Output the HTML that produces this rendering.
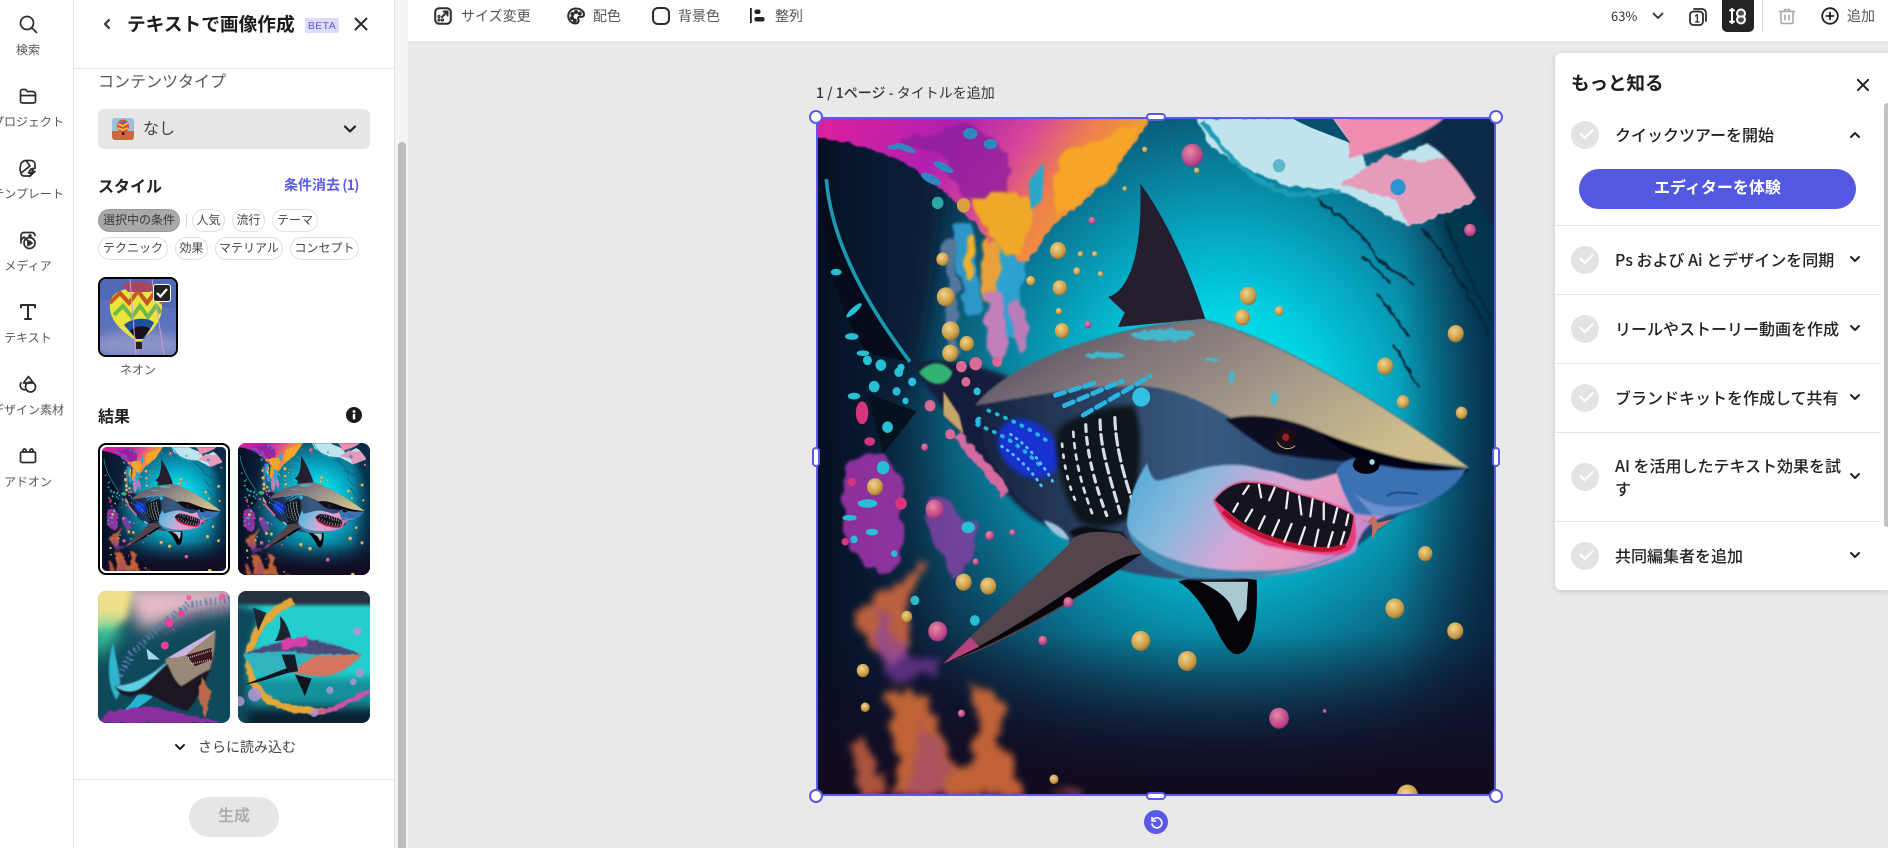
<!DOCTYPE html>
<html lang="ja"><head><meta charset="utf-8"><title>テキストで画像作成</title>
<style>
html,body{margin:0;padding:0;width:1888px;height:848px;overflow:hidden;background:#e9e9e9;font-family:"Liberation Sans","Noto Sans CJK JP",sans-serif;color:#2c2c2c}
.a{position:absolute;white-space:nowrap}
.n{font-family:"Noto Sans CJK JP","Liberation Sans",sans-serif}
.rl{position:absolute;left:0;width:56px;text-align:center;font-size:12px;line-height:16px;color:#555;white-space:nowrap;display:flex;justify-content:center}
.chip{position:absolute;height:21px;line-height:20px;border:1.5px solid #e1e1e1;border-radius:12px;font-size:12px;text-align:center;color:#444;background:#fff;box-sizing:content-box}
.ln{position:absolute;background:#e4e4e4;height:1px}
.rt{position:absolute;left:1615px;font-family:"Noto Sans CJK JP","Liberation Sans",sans-serif;font-size:16px;font-weight:500;color:#222;line-height:23px;white-space:nowrap}
.ck{position:absolute;left:1571px;width:28px;height:28px;border-radius:50%;background:#e3e3e3}
svg{position:absolute;overflow:hidden}
.ic{fill:none;stroke:#2c2c2c;stroke-width:1.7;stroke-linecap:round;stroke-linejoin:round}
</style></head><body>
<svg width="0" height="0" style="position:absolute">
<defs>
<radialGradient id="bg" gradientUnits="userSpaceOnUse" cx="930" cy="650" r="860">
<stop offset="0" stop-color="#00e6ee"/><stop offset=".24" stop-color="#02d4e4"/><stop offset=".44" stop-color="#06a6c0"/><stop offset=".64" stop-color="#0a7390"/><stop offset=".82" stop-color="#0b4460"/><stop offset="1" stop-color="#0f1c38"/></radialGradient>
<linearGradient id="bot" x1="0" y1="0" x2="0" y2="1"><stop offset=".76" stop-color="#100a20" stop-opacity="0"/><stop offset=".93" stop-color="#120b22" stop-opacity=".85"/><stop offset="1" stop-color="#130a20"/></linearGradient>
<linearGradient id="lft" x1="0" y1="0" x2="1" y2="0"><stop offset="0" stop-color="#060e20"/><stop offset=".07" stop-color="#07182e" stop-opacity=".85"/><stop offset=".2" stop-color="#08243c" stop-opacity="0"/></linearGradient>
<linearGradient id="rgt" x1="0" y1="0" x2="1" y2="0"><stop offset=".86" stop-color="#08243c" stop-opacity="0"/><stop offset="1" stop-color="#07203c" stop-opacity=".8"/></linearGradient>
<linearGradient id="top" x1="0" y1="0" x2="1" y2=".3"><stop offset="0" stop-color="#e0209a"/><stop offset=".4" stop-color="#b020b0"/><stop offset=".62" stop-color="#d84898"/><stop offset=".78" stop-color="#ee7f50"/><stop offset="1" stop-color="#f4aa22"/></linearGradient>
<linearGradient id="back" x1="0" y1=".1" x2="1" y2=".6"><stop offset="0" stop-color="#4a4657"/><stop offset=".3" stop-color="#7d7278"/><stop offset=".6" stop-color="#a29689"/><stop offset="1" stop-color="#d0bf8c"/></linearGradient>
<linearGradient id="side" x1="0" y1="0" x2="1" y2="0"><stop offset="0" stop-color="#16243f"/><stop offset=".45" stop-color="#3a5a80"/><stop offset="1" stop-color="#0e3a6a"/></linearGradient>
<linearGradient id="bel" x1="0" y1="0" x2="1" y2=".3"><stop offset="0" stop-color="#4ea8d8"/><stop offset=".3" stop-color="#88b8dc"/><stop offset=".55" stop-color="#d2a8d8"/><stop offset=".78" stop-color="#e89cc4"/><stop offset="1" stop-color="#c088d0"/></linearGradient>
<radialGradient id="gold" cx=".4" cy=".35" r=".7"><stop offset="0" stop-color="#f0d48a"/><stop offset=".7" stop-color="#c99a45"/><stop offset="1" stop-color="#8a6a30"/></radialGradient>
<radialGradient id="pnk" cx=".4" cy=".35" r=".7"><stop offset="0" stop-color="#e88aa0"/><stop offset=".8" stop-color="#b83f88"/><stop offset="1" stop-color="#7a2d70"/></radialGradient>
<filter id="b2" x="-30%" y="-30%" width="160%" height="160%"><feGaussianBlur stdDeviation="2"/></filter>
<filter id="b3" x="-30%" y="-30%" width="160%" height="160%"><feGaussianBlur stdDeviation="5"/></filter>
<filter id="b8" x="-60%" y="-60%" width="220%" height="220%"><feGaussianBlur stdDeviation="12"/></filter>
<filter id="b16" x="-60%" y="-60%" width="220%" height="220%"><feGaussianBlur stdDeviation="26"/></filter>
<filter id="r" x="-25%" y="-25%" width="150%" height="150%" color-interpolation-filters="sRGB"><feTurbulence type="fractalNoise" baseFrequency=".022" numOctaves="2" seed="4" result="n"/><feDisplacementMap in="SourceGraphic" in2="n" scale="42" xChannelSelector="R" yChannelSelector="G"/><feGaussianBlur stdDeviation="3"/></filter>
<filter id="sm" x="-25%" y="-25%" width="150%" height="150%" color-interpolation-filters="sRGB"><feTurbulence type="fractalNoise" baseFrequency=".03" numOctaves="2" seed="11" result="n"/><feDisplacementMap in="SourceGraphic" in2="n" scale="45" xChannelSelector="R" yChannelSelector="G"/><feGaussianBlur stdDeviation="8"/></filter>
<filter id="rs" x="-25%" y="-25%" width="150%" height="150%" color-interpolation-filters="sRGB"><feTurbulence type="fractalNoise" baseFrequency=".05" numOctaves="2" seed="9" result="n"/><feDisplacementMap in="SourceGraphic" in2="n" scale="14" xChannelSelector="R" yChannelSelector="G"/><feGaussianBlur stdDeviation="1.500"/></filter>
<symbol id="shark" viewBox="15 35 1520 1423" preserveAspectRatio="none">
<rect x="15" y="35" width="1520" height="1423" fill="url(#bg)"/>
<path d="M15 60H300C290 200 285 380 240 560L120 720 15 760Z" fill="#081c34" filter="url(#b16)"/>
<rect x="15" y="35" width="1520" height="1423" fill="url(#lft)"/>
<rect x="15" y="35" width="1520" height="1423" fill="url(#rgt)"/>
<rect x="15" y="35" width="1520" height="1423" fill="url(#bot)"/>
<path d="M1400 240L1535 120V560L1470 420Z" fill="#04384f" opacity=".75" filter="url(#b8)"/>
<!-- drips -->
<g fill="none" stroke-linecap="round" filter="url(#r)">
<path d="M345 280L365 430" stroke="#2f97c8" stroke-width="44"/>
<path d="M445 290L450 470" stroke="#2ea2cf" stroke-width="56"/>
<path d="M408 300L405 420" stroke="#e9a03a" stroke-width="34"/>
<path d="M412 420L425 520" stroke="#c27fbc" stroke-width="42"/>
<path d="M462 430L475 520" stroke="#bb7cba" stroke-width="28"/>
<path d="M362 290L358 370" stroke="#eeb22e" stroke-width="22"/>
<path d="M315 290L320 520" stroke="#53789c" stroke-width="26"/>
</g>
<!-- top splash -->
<path d="M15 35H760C730 90 690 140 640 190 600 230 560 240 530 280 510 310 490 340 470 340 450 300 430 290 400 300 390 260 350 250 330 220 270 160 190 100 15 78Z" fill="url(#top)" filter="url(#rs)"/>
<path d="M190 85L300 120 340 200 430 230 450 110 360 50Z" fill="#8e1f9e" opacity=".8" filter="url(#r)"/>
<path d="M360 200C420 190 470 190 500 220 500 270 470 320 450 330 420 290 380 260 360 200Z" fill="#f0a828" filter="url(#r)"/>
<path d="M560 120C620 90 690 60 740 50 700 130 640 190 560 250 540 220 540 160 560 120Z" fill="#f6a528" filter="url(#r)"/>
<path d="M490 170L525 130 520 210 495 230Z" fill="#2ea8c8" filter="url(#b2)"/>
<g fill="#2f88c0"><ellipse cx="405" cy="92" rx="15" ry="11"/><ellipse cx="360" cy="70" rx="16" ry="12"/><ellipse cx="272" cy="165" rx="24" ry="9" transform="rotate(25 272 165)"/><ellipse cx="215" cy="100" rx="24" ry="7" transform="rotate(20 215 100)"/><ellipse cx="300" cy="140" rx="24" ry="8" transform="rotate(25 300 140)"/><ellipse cx="190" cy="98" rx="16" ry="5"/><circle cx="287" cy="215" r="13" fill="#2aa8a8"/><circle cx="345" cy="220" r="15" fill="#d8a040"/></g>
<!-- top right -->
<path d="M865 38H1210L1250 150 1400 80 1520 175 1480 215 1340 265 1190 190 1070 180 990 150 900 100Z" fill="#c0e4ee" filter="url(#rs)"/>
<path d="M1170 38H1420C1380 70 1300 100 1205 122 1215 90 1190 60 1170 38Z" fill="#f08cb0" filter="url(#b2)"/>
<path d="M1190 175L1290 115 1370 130 1420 120 1520 175 1480 215 1340 265 1310 210Z" fill="#e59cba" filter="url(#rs)"/>
<path d="M1080 38H1170L1210 90C1160 70 1120 60 1080 38Z" fill="#07506e"/>
<path d="M1370 85L1420 40H1535V280C1480 180 1430 110 1370 85Z" fill="#0a2a48" filter="url(#b2)"/>
<circle cx="1316" cy="182" r="17" fill="#2d94d0"/><circle cx="1050" cy="137" r="14" fill="#5fb8c8"/>
<path d="M880 45C930 110 980 170 1070 195 1100 205 1150 190 1190 190" fill="none" stroke="#1d9cb4" stroke-width="10" filter="url(#rs)"/>
<g fill="none" stroke="#06283c" stroke-width="5" stroke-linecap="round" filter="url(#rs)"><path d="M1135 210C1200 250 1240 280 1270 330 1300 360 1330 370 1350 385"/><path d="M1240 330L1300 385"/><path d="M1270 405C1300 440 1320 470 1340 495"/><path d="M1310 515C1330 550 1350 580 1365 600"/><path d="M1370 270C1420 320 1470 400 1520 490"/><path d="M1420 250C1450 320 1480 380 1530 470"/></g>
<!-- tail -->
<path d="M30 165C22 300 60 440 130 530L225 548C150 470 70 340 40 165Z" fill="#060c1c"/>
<path d="M38 165C50 300 130 430 225 548" fill="none" stroke="#1c9ab0" stroke-width="8"/>
<path d="M165 742L240 652 130 615 150 690Z" fill="#06121f"/>
<!-- tail stalk -->
<path d="M230 555C280 535 380 550 470 590L560 700 580 900C530 905 470 860 430 810 360 730 300 650 230 555Z" fill="#151c3a" filter="url(#b3)"/>
<path d="M245 570C270 545 300 545 320 570 310 600 275 605 245 570Z" fill="#33b470" filter="url(#b2)"/>
<path d="M300 610L335 660 345 700 300 660Z" fill="#c8a66a" filter="url(#b2)"/>
<path d="M330 700C370 750 410 780 440 825" stroke="#d56aa0" stroke-width="20" fill="none" filter="url(#rs)"/>
<g fill="#d86a94"><circle cx="340" cy="558" r="12"/><circle cx="372" cy="552" r="14"/><circle cx="420" cy="548" r="11"/><circle cx="350" cy="590" r="10"/><circle cx="270" cy="640" r="12"/><circle cx="315" cy="700" r="11"/></g>
<g fill="#2cc0dc"><circle cx="375" cy="610" r="8"/><circle cx="410" cy="640" r="9"/><circle cx="380" cy="672" r="9"/><circle cx="420" cy="700" r="9"/><circle cx="455" cy="735" r="8"/><circle cx="490" cy="770" r="8"/><circle cx="440" cy="660" r="7"/><circle cx="230" cy="590" r="9"/><circle cx="205" cy="560" r="8"/><circle cx="215" cy="630" r="7"/></g>
<!-- left splatter -->
<path d="M75 760C120 730 190 740 205 790 210 840 170 860 215 890 190 930 220 960 190 985 130 990 95 960 85 920 60 880 90 830 70 800Z" fill="#a535b0" opacity=".85" filter="url(#r)"/>
<path d="M270 840C310 830 330 850 345 880 390 900 370 960 350 990L320 1000C290 940 250 900 270 840Z" fill="#8a40a8" opacity=".8" filter="url(#r)"/>
<g fill="#26c0d2"><ellipse cx="60" cy="360" rx="12" ry="7"/><ellipse cx="100" cy="440" rx="22" ry="6" transform="rotate(-40 100 440)"/><ellipse cx="95" cy="495" rx="15" ry="7"/><ellipse cx="120" cy="530" rx="14" ry="6"/><circle cx="130" cy="545" r="10"/><circle cx="160" cy="555" r="12"/><circle cx="200" cy="570" r="10"/><circle cx="145" cy="600" r="12"/><ellipse cx="100" cy="620" rx="14" ry="7"/><circle cx="195" cy="610" r="9"/><circle cx="175" cy="685" r="12"/><circle cx="165" cy="770" r="14"/><ellipse cx="130" cy="845" rx="22" ry="9"/><ellipse cx="90" cy="875" rx="16" ry="6"/><ellipse cx="140" cy="905" rx="14" ry="7"/><circle cx="236" cy="1048" r="10"/><circle cx="370" cy="1090" r="11"/><ellipse cx="355" cy="895" rx="15" ry="12"/><circle cx="190" cy="950" r="7"/><circle cx="100" cy="920" r="8"/></g>
<g fill="#d8357e"><ellipse cx="118" cy="655" rx="14" ry="24"/><ellipse cx="135" cy="715" rx="12" ry="9"/><circle cx="205" cy="845" r="13"/><circle cx="95" cy="800" r="9"/><circle cx="80" cy="925" r="8"/></g>
<!-- orange smoke -->
<g filter="url(#sm)" opacity=".92">
<path d="M268 968C240 975 225 995 195 1010 165 1030 125 1050 98 1075 100 1110 140 1140 170 1180 200 1200 225 1160 222 1100 212 1060 230 1010 268 968Z" fill="#c9663f"/>
<path d="M170 1240C200 1225 240 1240 270 1270 290 1320 300 1370 340 1400 370 1390 390 1300 350 1215L445 1260 420 1340 470 1420 480 1458H190C200 1400 190 1300 170 1240Z" fill="#cf6a38"/>
<path d="M100 1340C140 1345 160 1400 175 1458H120C105 1420 95 1380 100 1340Z" fill="#b85a40"/>
<path d="M540 1458L590 1440 620 1458Z" fill="#a85a50"/>
<path d="M160 1150C200 1170 240 1170 300 1170 270 1210 220 1230 170 1225Z" fill="#7a3aa0" opacity=".75"/>
<path d="M150 1060C180 1090 200 1130 215 1170 190 1190 165 1170 155 1130Z" fill="#9a4aa8" opacity=".7"/>
<path d="M250 1300L310 1380 300 1458H220Z" fill="#a0489a" opacity=".45"/>
</g>
<!-- dorsal -->
<path d="M740 175C800 250 855 370 885 458L690 475 705 445 668 412C715 400 745 320 740 175Z" fill="#241e2e"/>
<!-- lower fin -->
<path d="M825 1009C880 990 960 1000 1000 1005 1003 1080 995 1140 970 1156 950 1168 935 1160 903 1096 880 1060 855 1025 825 1009Z" fill="#040307"/>
<path d="M873 1009L981 1009 977 1068 959 1093 940 1054C925 1035 900 1020 873 1009Z" fill="#a9c8d2"/>
<!-- body -->
<g filter="url(#b2)">
<path d="M400 620C520 530 700 470 885 460 1060 505 1290 640 1475 770 1470 790 1420 830 1340 860 1280 880 1225 950 1150 975 1000 1010 800 1020 660 975 600 950 560 900 480 850 420 780 350 700 400 620Z" fill="url(#side)"/>
</g>
<ellipse cx="490" cy="730" rx="75" ry="55" transform="rotate(35 490 730)" fill="#1230d0" filter="url(#b3)"/>
<path d="M555 690C600 655 670 640 725 640 745 680 745 760 722 870 690 895 640 905 600 880 570 830 545 750 555 690Z" fill="#10121d" filter="url(#b3)"/>
<g filter="url(#b2)">
<path d="M370 640C450 540 700 470 885 460 1060 505 1290 640 1475 770L1260 745C1150 690 1050 660 950 670 880 630 790 590 700 600 600 600 500 620 370 640Z" fill="url(#back)"/>
<path d="M930 668C1000 650 1080 670 1130 690L1260 745 1300 760C1200 760 1100 750 1040 740 1000 720 960 690 930 668Z" fill="#0b0f22"/>
<path d="M1130 690C1230 730 1380 770 1475 770 1470 790 1420 785 1290 778 1200 745 1160 715 1130 690Z" fill="#060612"/>
</g>
<!-- cyan scale marks -->
<g fill="none" stroke-linecap="round"><path d="M550 618L640 592M570 640L700 588M612 660L762 578" stroke="#2cb4e0" stroke-width="10" stroke-dasharray="22 12"/><path d="M375 680C430 700 470 720 520 770M400 650C450 670 500 690 540 720" stroke="#22b4dc" stroke-width="8" stroke-dasharray="3 17"/><path d="M450 700C490 725 520 760 545 800M430 725C470 750 500 780 520 810" stroke="#58c4ff" stroke-width="6" stroke-dasharray="2 13"/></g>
<circle cx="742" cy="622" r="20" fill="#34c0e4"/>
<g fill="#3cc0d8" filter="url(#rs)" opacity=".9"><ellipse cx="790" cy="492" rx="70" ry="12"/><ellipse cx="660" cy="535" rx="45" ry="6"/><ellipse cx="945" cy="580" rx="7" ry="14"/><ellipse cx="1040" cy="625" rx="9" ry="15"/><ellipse cx="900" cy="545" rx="14" ry="5"/></g>
<!-- gills -->
<g fill="none" stroke="#eeeef4" stroke-linecap="round" opacity=".92"><path d="M565 720C570 770 580 810 600 850" stroke-width="6" stroke-dasharray="6 17"/><path d="M590 695C595 760 610 810 632 865" stroke-width="6" stroke-dasharray="10 14"/><path d="M618 680C620 740 640 810 665 870" stroke-width="7" stroke-dasharray="14 13"/><path d="M650 670C650 730 675 800 695 865" stroke-width="7" stroke-dasharray="20 11"/><path d="M683 665C685 730 705 790 722 840" stroke-width="7" stroke-dasharray="24 10"/></g>
<!-- belly -->
<g filter="url(#b2)">
<path d="M755 760C762 785 770 800 784 796 810 790 825 785 844 781 890 765 930 762 963 764 985 765 1005 772 1023 775 1060 780 1090 795 1112 796 1140 795 1160 785 1179 781 1190 810 1230 840 1300 868 1260 880 1232 895 1222 945 1160 985 1000 1010 850 1000 790 985 730 960 710 890 712 830 735 790 755 760Z" fill="url(#bel)"/>
<path d="M712 900C760 960 880 990 1000 985 1080 985 1150 975 1215 930 1160 985 1000 1010 850 1000 790 985 730 960 712 900Z" fill="#3c8cb4"/>
<path d="M1178 775C1190 760 1200 755 1216 750 1300 775 1400 780 1469 771 1445 815 1395 845 1305 869 1270 872 1240 870 1219 866 1200 835 1185 805 1178 775Z" fill="#3b72b4"/>
<path d="M1215 820C1260 860 1340 860 1400 835 1350 860 1300 870 1260 870Z" fill="#6a8fd0"/>
<path d="M580 905C620 880 640 900 700 905L730 950 680 965C640 950 610 930 580 905Z" fill="#0b0a14"/>
<path d="M523 880C545 885 570 895 582 922 560 918 540 905 523 880Z" fill="#9fc6e0"/>
</g>
<ellipse cx="1245" cy="764" rx="30" ry="19" fill="#050510"/><circle cx="1258" cy="758" r="6" fill="#9fdfe8"/>
<path d="M1290 830C1310 815 1340 825 1360 825" fill="none" stroke="#234f8c" stroke-width="5"/>
<ellipse cx="1063" cy="708" rx="22" ry="21" fill="#1c1014"/><circle cx="1065" cy="706" r="8" fill="#a01e22"/><path d="M1046 716C1055 733 1075 733 1086 724" fill="none" stroke="#d8b890" stroke-width="2"/>
<!-- mouth -->
<path d="M903 838C930 805 965 795 985 799 1030 800 1060 812 1096 824 1140 835 1190 850 1219 869L1222 908C1222 930 1210 945 1201 947 1180 955 1150 952 1134 950 1090 945 1050 938 1022 933 990 920 960 905 947 898 925 880 910 855 903 838Z" fill="#e83a78" filter="url(#b2)"/>
<path d="M907 838C930 808 965 798 985 802 1030 803 1060 815 1096 827 1140 838 1190 853 1216 870 1214 900 1205 925 1195 935 1170 940 1140 938 1125 935 1080 928 1050 925 1025 916 985 900 950 875 907 838Z" fill="#15131f"/>
<path d="M925 862C970 900 1040 928 1125 940 1155 942 1180 942 1198 932" fill="none" stroke="#bd1230" stroke-width="10"/>
<g stroke="#f3eff0" stroke-width="5" stroke-linecap="round" fill="none"><path d="M982 808L970 825M1005 806L1010 832M1040 812L1028 838M1070 822L1066 855M1095 830L1100 868M1125 836L1120 872M1150 845L1150 878M1180 855L1172 885M1205 868L1200 890"/><path d="M948 862L958 845M975 882L990 858M1005 898L1018 872M1035 912L1050 880M1062 925L1078 888M1095 930L1108 895M1130 934L1138 900M1160 936L1170 905M1188 930L1196 905"/></g>
<path d="M1220 870L1245 885 1262 870 1270 885 1305 878 1270 900 1258 922 1258 890Z" fill="#c0705c"/>
<!-- pectoral fin -->
<path d="M300 1180C350 1130 470 1030 579 932 590 904 640 900 694 908 720 925 740 940 743 950 640 1020 450 1140 300 1180Z" fill="#54444c"/>
<path d="M302 1180C450 1130 640 1020 743 950 715 952 690 960 650 984 530 1060 420 1130 302 1180Z" fill="#08060c"/>
<path d="M302 1180L360 1125 380 1145Z" fill="#b83f80"/>
<!-- bubbles -->
<g fill="url(#gold)"><circle cx="556" cy="315" r="18"/><circle cx="560" cy="393" r="16"/><circle cx="565" cy="483" r="16"/><circle cx="316" cy="483" r="20"/><circle cx="305" cy="412" r="20"/><circle cx="352" cy="510" r="16"/><circle cx="298" cy="333" r="14"/><circle cx="981" cy="410" r="19"/><circle cx="968" cy="455" r="17"/><circle cx="1050" cy="441" r="10"/><circle cx="1445" cy="489" r="18"/><circle cx="1287" cy="557" r="18"/><circle cx="1327" cy="632" r="14"/><circle cx="1458" cy="655" r="13"/><circle cx="1377" cy="950" r="16"/><circle cx="1309" cy="1065" r="21"/><circle cx="1444" cy="1112" r="18"/><circle cx="741" cy="1133" r="21"/><circle cx="845" cy="1175" r="21"/><circle cx="400" cy="1018" r="18"/><circle cx="345" cy="1010" r="18"/><circle cx="1337" cy="1458" r="24"/><circle cx="547" cy="1423" r="10"/><circle cx="120" cy="1195" r="14"/><circle cx="147" cy="810" r="18"/><circle cx="495" cy="378" r="10"/><circle cx="598" cy="358" r="8"/><circle cx="558" cy="442" r="7"/><circle cx="651" cy="364" r="6"/><circle cx="606" cy="322" r="6"/><circle cx="638" cy="322" r="6"/><circle cx="125" cy="1272" r="10"/><circle cx="218" cy="1082" r="12"/><circle cx="315" cy="530" r="18"/><circle cx="750" cy="103" r="6"/><circle cx="705" cy="185" r="5"/><circle cx="866" cy="147" r="6"/></g>
<g fill="url(#pnk)"><circle cx="856" cy="115" r="24"/><circle cx="1050" cy="1295" r="22"/><circle cx="287" cy="1113" r="21"/><circle cx="1477" cy="272" r="13"/><circle cx="280" cy="857" r="20"/><circle cx="403" cy="912" r="10"/><circle cx="579" cy="1052" r="11"/><circle cx="522" cy="1132" r="10"/><circle cx="258" cy="727" r="8"/><circle cx="340" cy="1285" r="8"/><circle cx="1152" cy="1280" r="4"/><circle cx="623" cy="470" r="8"/><circle cx="632" cy="252" r="8"/><circle cx="454" cy="906" r="7"/><circle cx="372" cy="967" r="7"/></g>
</symbol>
<symbol id="s3" viewBox="0 0 395 395" preserveAspectRatio="none">
<rect width="395" height="395" fill="#0f4a5c"/>
<path d="M60 -20H420V45L280 65 130 120Z" fill="#e9bcc8" filter="url(#b16)"/>
<path d="M-20 -20H110L90 80 40 120 -20 120Z" fill="#f0e08a" filter="url(#b8)"/>
<path d="M-20 100L60 90 70 130 -20 210Z" fill="#3ed0a0" filter="url(#b16)"/>
<g filter="url(#rs)" fill="none"><path d="M395 25L270 40 180 110 100 190 60 260" stroke="#5b7aac" stroke-width="22" stroke-dasharray="5 9"/><path d="M380 50L290 70 200 130" stroke="#8e50a0" stroke-width="10" stroke-dasharray="4 10"/></g>
<circle cx="213" cy="95" r="13" fill="#ee3f98"/><circle cx="200" cy="163" r="12" fill="#ee3f98"/><circle cx="250" cy="68" r="10" fill="#ee3f98"/><circle cx="372" cy="18" r="10" fill="#ee5f9e"/><circle cx="272" cy="20" r="8" fill="#ee5f9e"/>
<path d="M45 155C25 220 30 290 55 325 80 290 60 240 45 155Z" fill="#2fb5cc" filter="url(#b2)"/>
<path d="M40 385C120 355 170 320 190 285L130 290C110 330 80 360 40 385Z" fill="#25b5d0"/>
<path d="M50 285C100 280 130 265 170 240 220 200 290 155 352 118 345 170 345 215 335 240 310 290 290 340 265 360 200 340 160 300 120 310 90 325 65 310 50 285Z" fill="#1f1822" filter="url(#b2)"/>
<path d="M50 285C100 280 130 265 170 240 220 200 290 155 352 118 320 150 280 170 250 185 200 215 170 260 130 290 100 310 70 300 50 285Z" fill="#5ed0e4" filter="url(#b2)"/>
<path d="M150 205L145 172 185 205Z" fill="#a8d8e8"/>
<path d="M200 205C240 185 300 145 352 118 350 170 345 205 335 235 300 250 270 275 250 285 225 270 215 230 200 205Z" fill="#9a8878" filter="url(#b2)"/>
<path d="M210 200C250 175 310 140 352 118 320 150 290 165 265 190 245 200 225 200 210 200Z" fill="#c9b6e0"/>
<path d="M265 192L340 170 342 205 290 225Z" fill="#3a161e"/>
<path d="M270 200L340 178M280 218L338 205" stroke="#f3ece6" stroke-width="5" stroke-dasharray="2 4"/>
<path d="M0 395L30 360 160 345 240 365 360 390V395Z" fill="#8b2fa0" filter="url(#rs)"/>
<path d="M300 320L310 260 340 300 320 380Z" fill="#b86a4a" filter="url(#rs)"/>
</symbol>
<symbol id="s4" viewBox="0 0 395 395" preserveAspectRatio="none">
<rect width="395" height="395" fill="#22cfce"/>
<path d="M-20 340H420V420H-20Z" fill="#0c2430" filter="url(#b8)"/>
<path d="M-20 260H420V360H-20Z" fill="#0d6878" opacity=".6" filter="url(#b8)"/>
<rect x="-20" y="-20" width="440" height="62" fill="#27323c" filter="url(#b3)"/>
<path d="M-30 0V420H30L30 200 70 60 -30 30Z" fill="#0b4a5c" filter="url(#b8)"/>
<path d="M165 30C70 70 10 170 40 260 70 340 150 360 260 360" fill="none" stroke="#e3a63a" stroke-width="22" filter="url(#rs)"/>
<path d="M220 360C270 370 330 330 395 300" fill="none" stroke="#cf52a8" stroke-width="14" filter="url(#rs)"/>
<path d="M45 50L85 65 60 120Z" fill="#1b2530"/>
<path d="M125 75C145 90 155 125 160 145L110 150C125 125 130 100 125 75Z" fill="#1b2530"/>
<path d="M15 190C90 150 210 130 260 150 310 160 340 180 372 190 340 225 300 250 260 255 190 260 110 255 70 250 50 240 30 215 15 190Z" fill="#30b3c0" filter="url(#b2)"/>
<path d="M20 190C80 160 170 140 220 148 300 160 340 180 372 190L240 190C170 175 100 180 20 190Z" fill="#4c4a78" filter="url(#rs)"/>
<path d="M130 145L210 135 210 165 130 175Z" fill="#d43fa8" filter="url(#rs)"/>
<path d="M230 195L372 190C340 225 300 250 260 255 230 255 180 250 160 240Z" fill="#d6735f" filter="url(#b2)"/>
<path d="M130 190L170 190 180 240 150 245Z" fill="#171a26"/>
<path d="M20 280C70 260 120 240 150 230L150 245C100 260 60 275 20 280Z" fill="#12131e"/>
<path d="M170 250L220 262 200 315C190 290 180 270 170 250Z" fill="#10121c"/>
<g fill="#b295d4" opacity=".85"><circle cx="357" cy="120" r="13"/><circle cx="365" cy="245" r="13"/><circle cx="345" cy="272" r="10"/><circle cx="275" cy="297" r="11"/><circle cx="50" cy="310" r="20"/><circle cx="5" cy="330" r="15"/><circle cx="228" cy="365" r="12"/></g>
</symbol>
<symbol id="ball" viewBox="0 0 76 76" preserveAspectRatio="none">
<rect width="76" height="76" fill="#5b71bb"/>
<path d="M0 0H76V30L0 20Z" fill="#4a66b5" opacity=".7"/>
<ellipse cx="38" cy="66" rx="46" ry="14" fill="#8a92c8" filter="url(#b3)"/>
<path d="M10 24C12 4 62 2 62 28 62 46 46 56 42 62H36C26 54 8 44 10 24Z" fill="#e9e53c"/>
<path d="M10 24L20 14 29 24 38 12 47 24 55 13 62 24" fill="none" stroke="#c95622" stroke-width="4"/>
<path d="M14 36L23 27 32 38 40 27 48 38 56 27 61 34" fill="none" stroke="#6fb84c" stroke-width="4"/>
<path d="M22 6C32 1 50 1 56 8L50 13H28Z" fill="#a8465c"/>
<path d="M24 46C32 38 50 38 54 44L44 60H36Z" fill="#204ea0"/>
<path d="M30 52C36 46 46 46 50 50L42 60H37Z" fill="#1a0f1c"/>
<rect x="36" y="63" width="6" height="7" fill="#2c1f20"/>
<path d="M30 0L36 76M52 0L64 76" stroke="#d49ad8" stroke-width="1"/>
</symbol>
</defs></svg>

<!-- Left rail -->
<div class="a" style="left:0;top:0;width:74px;height:848px;background:#fff;border-right:1px solid #e2e2e2;box-sizing:border-box"></div>
<svg class="ic" style="left:18px;top:14px" width="20" height="20" viewBox="0 0 20 20"><circle cx="9" cy="9" r="6.500"/><path d="M14 14l4.500 4.500"/></svg>
<div class="rl" style="top:42px">検索</div>
<svg class="ic" style="left:18px;top:86px" width="20" height="20" viewBox="0 0 20 20"><path d="M2.500 7V5.500a2 2 0 0 1 2-2h3l2 2h5a3 3 0 0 1 3 3V15a2 2 0 0 1-2 2h-11a2 2 0 0 1-2-2ZM2.500 9.500h15"/></svg>
<svg class="ic" style="left:18px;top:158px" width="20" height="20" viewBox="0 0 20 20"><path d="M8 2.500h5a4 4 0 0 1 4 4v4M2.500 8a5.500 5.500 0 0 1 5.500-5.500L12 8l-9 7a10 10 0 0 1-.5-7ZM3 15a3 3 0 0 0 3 3h5M13 11l-2.500 4h3L11.500 18.500 17 13.500h-3l1.500-3Z"/></svg>
<svg class="ic" style="left:18px;top:230px" width="20" height="20" viewBox="0 0 20 20"><path d="M3 13V5.500a3 3 0 0 1 3-3h8a3 3 0 0 1 3 3M3 10l3-3 3 3"/><circle cx="12" cy="5.800" r=".8"/><circle cx="11.500" cy="13" r="5.500"/><path d="M10 10.500l4 2.500-4 2.500Z" fill="#2c2c2c"/></svg>
<div class="rl" style="top:258px">メディア</div>
<svg class="ic" style="left:18px;top:302px;stroke-width:2" width="20" height="20" viewBox="0 0 20 20"><path d="M3 5.500V3h14v2.500M10 3v14M7 17h6"/></svg>
<div class="rl" style="top:330px">テキスト</div>
<svg class="ic" style="left:18px;top:374px" width="20" height="20" viewBox="0 0 20 20"><path d="M10.500 2.500l5 6.500H5.500Z"/><circle cx="12.500" cy="13" r="5"/><path d="M3 8.800a4.500 4.500 0 0 0 4 7"/></svg>
<svg class="ic" style="left:18px;top:446px" width="20" height="20" viewBox="0 0 20 20"><rect x="2.500" y="6" width="15" height="10.500" rx="1.500"/><path d="M5 6V4.500a1.500 1.500 0 0 1 3 0V6M12 6V4.500a1.500 1.500 0 0 1 3 0V6"/></svg>
<div class="rl" style="top:474px">アドオン</div>

<!-- Panel -->
<div class="a" style="left:74px;top:0;width:320px;height:848px;background:#fff"></div>
<div class="rl" style="top:114px;z-index:1"><span>プロジェクト</span></div>
<div class="rl" style="top:186px;z-index:1"><span>テンプレート</span></div>
<div class="rl" style="top:402px;z-index:1"><span>デザイン素材</span></div>
<div class="a" style="left:394px;top:0;width:14px;height:848px;background:#f3f3f3;border-left:1px solid #e2e2e2;box-sizing:border-box"></div>
<div class="a" style="left:398px;top:142px;width:8px;height:706px;background:#bcbcbc;border-radius:4px 4px 0 0"></div>
<svg class="ic" style="left:100px;top:17px;stroke-width:2" width="14" height="14" viewBox="0 0 14 14"><path d="M9 3L5 7l4 4"/></svg>
<div class="a" style="left:127px;top:12px;font-size:18.700px;font-weight:700;line-height:26px;color:#1b1b1b">テキストで画像作成</div>
<div class="a" style="left:305px;top:18px;width:34px;height:15px;background:#dcdcfb;border-radius:2px;color:#5d5dd8;font-size:10.500px;line-height:16px;text-align:center;letter-spacing:.4px">BETA</div>
<svg class="ic" style="left:354px;top:17px;stroke-width:2" width="14" height="14" viewBox="0 0 14 14"><path d="M1.500 1.500l11 11M12.500 1.500l-11 11"/></svg>
<div class="ln" style="left:74px;top:68px;width:320px"></div>
<div class="a" style="left:98px;top:69px;font-size:16px;line-height:26px;height:25px;color:#555;overflow:hidden"><span style="position:relative;top:1px">コンテンツタイプ</span></div>
<div class="a" style="left:98px;top:109px;width:272px;height:40px;background:#e6e6e6;border-radius:6px"></div>
<svg style="left:112px;top:118px;border-radius:3px" width="22" height="22" viewBox="0 0 22 22"><rect width="22" height="13" fill="#9fc0dc"/><rect y="13" width="22" height="9" fill="#c86a3c"/><ellipse cx="11" cy="8" rx="6" ry="6.500" fill="#e84a3c"/><path d="M6 6l5 2 5-3M6 10l5 2 5-2" stroke="#f0d040" stroke-width="1.500" fill="none"/><path d="M8 3l3 2 3-2" stroke="#3080c0" stroke-width="1.500" fill="none"/><rect x="10" y="14" width="2.500" height="3" fill="#402820"/></svg>
<div class="a" style="left:143px;top:118px;font-size:16px;line-height:24px;color:#444">なし</div>
<svg class="ic" style="left:343px;top:122px;stroke-width:2.200;stroke:#222" width="14" height="14" viewBox="0 0 14 14"><path d="M2 4.500l5 5 5-5"/></svg>
<div class="a" style="left:98px;top:176px;font-size:16px;font-weight:700;line-height:24px;color:#222">スタイル</div>
<div class="a n" style="left:284px;top:174px;font-size:14px;font-weight:700;line-height:22px;color:#5c5ce0">条件消去 <span style="margin-left:-1px;letter-spacing:-.8px">(1)</span></div>
<div class="chip" style="left:98px;top:209px;width:80px;background:#a9a9a9;border-color:#989898;color:#3a3a3a">選択中の条件</div>
<div class="a" style="left:186px;top:214px;width:1px;height:13px;background:#d5d5d5"></div>
<div class="chip" style="left:192px;top:209px;width:31px">人気</div>
<div class="chip" style="left:232px;top:209px;width:31px">流行</div>
<div class="chip" style="left:272px;top:209px;width:44px">テーマ</div>
<div class="chip" style="left:98px;top:237px;width:68px">テクニック</div>
<div class="chip" style="left:175px;top:237px;width:31px">効果</div>
<div class="chip" style="left:215px;top:237px;width:66px">マテリアル</div>
<div class="chip" style="left:290px;top:237px;width:67px">コンセプト</div>
<div class="a" style="left:98px;top:277px;width:80px;height:80px;border:2px solid #000;border-radius:8px;box-sizing:border-box;overflow:hidden"><svg width="76" height="76"><use href="#ball"/></svg></div>
<div class="a" style="left:153px;top:284px;width:18px;height:18px;background:#222;border:1px solid #fff;border-radius:3px;box-sizing:border-box"></div>
<svg style="left:155px;top:287px;fill:none;stroke:#fff;stroke-width:2.200" width="14" height="12" viewBox="0 0 14 12"><path d="M2 6l3.500 3.500L12 2"/></svg>
<div class="a" style="left:98px;top:362px;width:80px;text-align:center;font-size:12px;line-height:16px;color:#555">ネオン</div>
<div class="a" style="left:98px;top:405px;font-size:16px;font-weight:700;line-height:26px;color:#222">結果</div>
<svg style="left:346px;top:407px" width="16" height="16" viewBox="0 0 16 16"><circle cx="8" cy="8" r="8" fill="#1b1b1b"/><rect x="6.800" y="6.800" width="2.400" height="5.500" fill="#fff"/><circle cx="8" cy="4.500" r="1.400" fill="#fff"/></svg>

<div class="a" style="left:98px;top:443px;width:132px;height:132px;border:2px solid #000;border-radius:8px;box-sizing:border-box;background:#fff;padding:2px"><div style="width:124px;height:124px;border-radius:5px;overflow:hidden"><svg style="position:static;display:block" width="124" height="124"><use href="#shark"/></svg></div></div>
<div class="a" style="left:238px;top:443px;width:132px;height:132px;border-radius:8px;overflow:hidden"><svg width="132" height="132"><use href="#shark"/></svg></div>
<div class="a" style="left:98px;top:591px;width:132px;height:132px;border-radius:8px;overflow:hidden"><svg width="132" height="132"><use href="#s3"/></svg></div>
<div class="a" style="left:238px;top:591px;width:132px;height:132px;border-radius:8px;overflow:hidden"><svg width="132" height="132"><use href="#s4"/></svg></div>
<svg class="ic" style="left:174px;top:741px;stroke-width:2;stroke:#222" width="12" height="12" viewBox="0 0 12 12"><path d="M2 4l4 4 4-4"/></svg>
<div class="a" style="left:198px;top:736px;font-size:14px;line-height:22px;color:#444">さらに読み込む</div>
<div class="ln" style="left:74px;top:779px;width:320px"></div>
<div class="a" style="left:189px;top:797px;width:90px;height:40px;border-radius:20px;background:#e6e6e6;color:#aeaeae;font-size:16px;font-weight:700;line-height:39px;text-align:center">生成</div>

<!-- Top bar -->
<div class="a" style="left:408px;top:0;width:1480px;height:41px;background:#fff"></div>
<svg class="ic" style="left:434px;top:7px;stroke-width:2" width="18" height="18" viewBox="0 0 18 18"><rect x="1.200" y="1.200" width="15.600" height="15.600" rx="4"/><path d="M8 10l5-5M9.500 4.500H13.500V8.500"/><circle cx="5" cy="9.500" r=".6"/><circle cx="8.500" cy="13" r=".6"/><circle cx="5" cy="13" r=".6"/></svg>
<div class="a" style="left:461px;top:5px;font-size:14px;line-height:22px;color:#555">サイズ変更</div>
<svg class="ic" style="left:567px;top:7px;stroke-width:2" width="18" height="18" viewBox="0 0 18 18"><path d="M9 1.500c4.500 0 8 2.800 8 6 0 2.500-2.500 2.500-4 2.300-1.800-.2-2.500 1.200-1.700 2.500 1 1.800-.2 4.200-2.800 4.200a7.500 7.500 0 0 1 .5-15Z"/><circle cx="5.500" cy="7" r="1" fill="#2c2c2c"/><circle cx="9" cy="5" r="1" fill="#2c2c2c"/><circle cx="12.800" cy="6.500" r="1" fill="#2c2c2c"/><circle cx="5" cy="11" r="1" fill="#2c2c2c"/><circle cx="7.800" cy="13.500" r="1" fill="#2c2c2c"/></svg>
<div class="a" style="left:593px;top:5px;font-size:14px;line-height:22px;color:#555">配色</div>
<svg class="ic" style="left:651px;top:6px;stroke-width:2" width="20" height="20" viewBox="0 0 20 20"><rect x="2" y="2" width="16" height="16" rx="5"/></svg>
<div class="a" style="left:678px;top:5px;font-size:14px;line-height:22px;color:#555">背景色</div>
<svg style="left:750px;top:8px" width="16" height="16" viewBox="0 0 16 16"><rect x="0" y="0" width="1.800" height="15" fill="#222"/><rect x="4.500" y="1.500" width="6" height="4.500" rx="2" fill="#222"/><rect x="4.500" y="9" width="10" height="4.500" rx="2" fill="#222"/></svg>
<div class="a" style="left:775px;top:5px;font-size:14px;line-height:22px;color:#555">整列</div>

<div class="a n" style="left:1611px;top:6px;font-size:13px;line-height:20px;color:#333">63%</div>
<svg class="ic" style="left:1652px;top:10px;stroke-width:1.800" width="12" height="12" viewBox="0 0 12 12"><path d="M1.500 3.500l4.500 4.500 4.500-4.500"/></svg>
<svg class="ic" style="left:1688px;top:7px;stroke-width:1.800" width="20" height="20" viewBox="0 0 20 20"><rect x="2" y="4.500" width="13" height="13.500" rx="3.500"/><path d="M6 2h8a4 4 0 0 1 4 4v8"/><path d="M7.500 9l1.800-1.300V15M7.500 15h3.600" stroke-width="1.300"/></svg>
<div class="a" style="left:1722px;top:0;width:32px;height:32px;background:#242424;border-radius:0 0 5px 5px"></div>
<svg style="left:1728px;top:6px;fill:none;stroke:#fff;stroke-width:2" width="20" height="20" viewBox="0 0 20 20"><path d="M4 3v14M1.500 5L4 3l2.500 2M1.500 15L4 17l2.500-2"/><path d="M13 3.500a4 4 0 0 1 4 4 3.500 3.500 0 0 1-2 3 3.500 3.500 0 0 1 2 3 4 4 0 0 1-8 0 3.500 3.500 0 0 1 2-3 3.500 3.500 0 0 1-2-3 4 4 0 0 1 4-4Z" fill="#fff" fill-opacity=".2"/><path d="M9 10.500h8"/></svg>
<div class="a" style="left:1762px;top:0;width:1px;height:32px;background:#dcdcdc"></div>
<svg class="ic" style="left:1778px;top:7px;stroke:#a8a8a8;stroke-width:1.600" width="18" height="18" viewBox="0 0 18 18"><path d="M1.500 4.500h15M6.500 4.500V2.500h5v2M3 4.500V15a1.500 1.500 0 0 0 1.500 1.500h9A1.500 1.500 0 0 0 15 15V4.500M7 8v5M11 8v5"/></svg>
<svg class="ic" style="left:1821px;top:7px;stroke-width:1.800;stroke:#222" width="18" height="18" viewBox="0 0 18 18"><circle cx="9" cy="9" r="7.800"/><path d="M9 5.500v7M5.500 9h7"/></svg>
<div class="a" style="left:1847px;top:5px;font-size:14px;line-height:22px;color:#555">追加</div>

<!-- Canvas -->
<div class="a n" style="left:816px;top:82px;font-size:14px;line-height:22px;color:#333"><span style="font-weight:500">1 / 1ページ -</span> タイトルを追加</div>
<svg style="left:816px;top:117px" width="680" height="679"><use href="#shark" width="680" height="679"/></svg>
<div class="a" style="left:816px;top:117px;width:680px;height:679px;border:2px solid #5a5ae6;box-sizing:border-box"></div>
<style>.h{position:absolute;background:#fff;border:2px solid #5a5ae6;box-sizing:border-box}.h.c{width:14px;height:14px;border-radius:50%;background:#fff;border-width:2.500px}</style>
<div class="h c" style="left:809px;top:110px"></div><div class="h c" style="left:1489px;top:110px"></div><div class="h c" style="left:809px;top:789px"></div><div class="h c" style="left:1489px;top:789px"></div>
<div class="h" style="left:1146px;top:113px;width:20px;height:8px;border-radius:4px"></div><div class="h" style="left:1146px;top:792px;width:20px;height:8px;border-radius:4px"></div>
<div class="h" style="left:812px;top:447px;width:8px;height:20px;border-radius:4px"></div><div class="h" style="left:1492px;top:447px;width:8px;height:20px;border-radius:4px"></div>
<div class="a" style="left:1144px;top:810px;width:24px;height:24px;border-radius:50%;background:#5a5ae6"></div>
<svg style="left:1149px;top:815px;fill:none;stroke:#fff;stroke-width:1.600;stroke-linecap:round;stroke-linejoin:round" width="14" height="14" viewBox="0 0 14 14"><path d="M3 2.500v3.500h3.500M3.200 6A5 5 0 1 1 3 9"/></svg>

<!-- Learn more panel -->
<div class="a" style="left:1555px;top:53px;width:333px;height:537px;background:#fff;border-radius:6px 0 0 6px;box-shadow:0 1px 6px rgba(0,0,0,.15)"></div>
<div class="a" style="left:1571px;top:71px;font-size:18.500px;font-weight:700;line-height:26px;color:#1b1b1b">もっと知る</div>
<svg class="ic" style="left:1857px;top:79px;stroke-width:2;stroke:#222" width="12" height="12" viewBox="0 0 12 12"><path d="M.5.500l11 11M11.500.500l-11 11"/></svg>
<div class="a" style="left:1884px;top:103px;width:4px;height:424px;background:#c2c2c2;border-radius:3px 0 0 3px"></div>
<style>.ck::after{content:"";position:absolute;left:8.500px;top:7px;width:11px;height:6px;border-left:2px solid #fff;border-bottom:2px solid #fff;transform:rotate(-45deg)}</style>
<div class="ck" style="top:121px"></div><div class="rt" style="top:123px">クイックツアーを開始</div>
<svg class="ic" style="left:1849px;top:129px;stroke-width:2;stroke:#222" width="12" height="12" viewBox="0 0 12 12"><path d="M2 8l4-4 4 4"/></svg>
<div class="a" style="left:1579px;top:169px;width:277px;height:40px;border-radius:20px;background:#5258e0;color:#fff;font-size:16px;font-weight:700;line-height:39px;text-align:center">エディターを体験</div>
<div class="ln" style="left:1555px;top:225px;width:325px"></div>
<div class="ck" style="top:246px"></div><div class="rt" style="top:248px">Ps および Ai とデザインを同期</div>
<svg class="ic" style="left:1849px;top:253px;stroke-width:2;stroke:#222" width="12" height="12" viewBox="0 0 12 12"><path d="M2 4l4 4 4-4"/></svg>
<div class="ln" style="left:1555px;top:294px;width:325px"></div>
<div class="ck" style="top:315px"></div><div class="rt" style="top:317px">リールやストーリー動画を作成</div>
<svg class="ic" style="left:1849px;top:322px;stroke-width:2;stroke:#222" width="12" height="12" viewBox="0 0 12 12"><path d="M2 4l4 4 4-4"/></svg>
<div class="ln" style="left:1555px;top:363px;width:325px"></div>
<div class="ck" style="top:384px"></div><div class="rt" style="top:386px">ブランドキットを作成して共有</div>
<svg class="ic" style="left:1849px;top:391px;stroke-width:2;stroke:#222" width="12" height="12" viewBox="0 0 12 12"><path d="M2 4l4 4 4-4"/></svg>
<div class="ln" style="left:1555px;top:432px;width:325px"></div>
<div class="ck" style="top:463px"></div><div class="rt" style="top:454px">AI を活用したテキスト効果を試<br>す</div>
<svg class="ic" style="left:1849px;top:470px;stroke-width:2;stroke:#222" width="12" height="12" viewBox="0 0 12 12"><path d="M2 4l4 4 4-4"/></svg>
<div class="ln" style="left:1555px;top:521px;width:325px"></div>
<div class="ck" style="top:542px"></div><div class="rt" style="top:544px">共同編集者を追加</div>
<svg class="ic" style="left:1849px;top:549px;stroke-width:2;stroke:#222" width="12" height="12" viewBox="0 0 12 12"><path d="M2 4l4 4 4-4"/></svg>
</body></html>
